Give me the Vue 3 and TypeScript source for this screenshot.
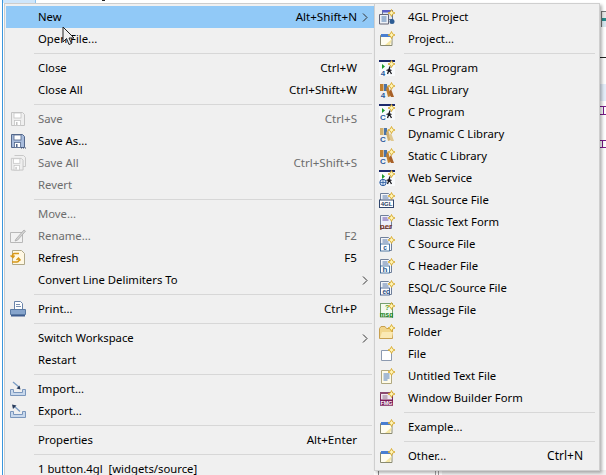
<script setup lang="ts">
type Row = { label?: string; key?: string; icon?: string; off?: boolean; arrow?: boolean; active?: boolean; sep?: boolean };

const star = '<path d="M12.500 .5l1.100 2.400 2.400 1.100-2.400 1.100-1.100 2.400-1.100-2.400-2.400-1.100 2.400-1.100z" fill="#fff6b8" stroke="#d8a828" stroke-width=".9"/>';
const sheet = '<path d="M1.500 1.500h8l3 3v10h-11z" fill="#f4f6fa" stroke="#70809a"/><path d="M3.500 4h5M3.500 6h6" stroke="#5878a8"/>';
const label = (t: string, c: string, x = 8, s = 6.500) => `<rect x="1.500" y="8" width="${t.length > 2 ? 12 : 9}" height="7" fill="#fff" stroke="${c}" stroke-width=".8"/><text x="${x}" y="14" font-size="${s}" font-family="Liberation Sans" font-weight="700" text-anchor="middle" fill="${c}">${t}</text>`;
const wiz = '<path d="M1.500 4.500h11.500v10H1.500z" fill="#fffdf0" stroke="#8a8a70"/><rect x="2" y="3" width="11" height="3" fill="#4a7fd0"/><path d="M11 14 L6 14 L13 8z" fill="#f5e6a0"/>' + star;
const runner = (t: string) => `<rect x="0" y="0" width="16" height="2" fill="#1c2a6c"/><rect x="0" y="2" width="16" height="14" fill="#f8fafc"/><path d="M3 4l3 2.500-3 2.500z" fill="#1a9a2a"/><text x="4" y="15.500" font-size="8" font-family="Liberation Sans" font-weight="700" text-anchor="middle" fill="#2a5a9c">${t}</text><path d="M11 6.500l-1 3-2.500 1M10 9.500l2.500 1M10 10l-1.500 4M10.500 10.500l2 3.500" stroke="#1a1a20" stroke-width="1.300" fill="none"/>` + star;
const books = (t: string, c = '#c08030') => `<path d="M1 2h3.500v7H1z" fill="${c}"/><path d="M5 2h3v7H5z" fill="#4a74a8"/><path d="M9 3l3 11-3 1-2-8z" fill="${c}"/><path d="M12 7l3 8h-3l-2-5z" fill="${c === '#c08030' ? '#a86028' : '#e0c890'}"/><text x="4" y="15.500" font-size="8" font-family="Liberation Sans" font-weight="700" text-anchor="middle" fill="#2a5a9c">${t}</text>` + star;
const disk = (c: string, b: string) => `<path d="M1.500 1.500h11l2 2v11h-13z" fill="${b}" stroke="${c}"/><rect x="4" y="2" width="7" height="5" fill="#fff" stroke="${c}" stroke-width=".8"/><rect x="4.500" y="9.500" width="6" height="5" fill="#fff" stroke="${c}" stroke-width=".8"/><rect x="6" y="11" width="1.500" height="3" fill="${c}"/>`;
const tray = '<path d="M.5 8.500h3v3h9v-3h3v6H.5z" fill="#c8d8ec" stroke="#7a96bc"/>';

const icons: Record<string, string> = {
  save: disk('#c4c4c4', '#efefef'),
  saveas: disk('#54688c', '#a8bcdc') + '<path d="M15 15h1M13 15h1M11 15h1" stroke="#3a4a68"/>',
  saveall: '<path d="M4.500 .5h9l2 2v9h-3" fill="none" stroke="#c8c8c8"/>' + '<g transform="translate(0 2) scale(.9)">' + disk('#c4c4c4', '#efefef') + '</g>',
  rename: '<path d="M.5 4.500h12v10H.5z" fill="#f2f2f2" stroke="#b8b8b8"/><path d="M6 11l8-9 1.500 1.200-8 9-2.500.8z" fill="#d4d4d4" stroke="#a8a8a8" stroke-width=".8"/>',
  refresh: '<path d="M2.500 .5h9l3 3v11h-12z" fill="#fff8e4" stroke="#b0a888"/><path d="M9 3.500H4.500C3 3.500 2 5 3 6.500M.5 5.500l2.500 2 1.500-2M2 12h5c2 0 2.500-2 1.500-3.500M10.500 10.500 8.500 8 6.500 10" stroke="#d89818" stroke-width="1.500" fill="none"/>',
  print: '<path d="M4.500 .5h6l2 2v6h-8z" fill="#fff" stroke="#6a84aa"/><path d="M6 3.500h4M6 5.500h5" stroke="#7a90b0"/><path d="M.5 8.500h15v5H.5z" fill="#86a4cc" stroke="#5a7aa4"/><path d="M1 14h14v1.500H1z" fill="#3e5c90"/>',
  import: tray + '<path d="M3 1l6 5" stroke="#7a9cc4" stroke-width="1.300"/><path d="M10.500 8.500 6.500 7.500 9.500 4.500z" fill="#283c5c"/>',
  export: tray + '<path d="M4 3l6 5.500" stroke="#7a9cc4" stroke-width="1.300"/><path d="M2 1.500 6.500 2.500 3 6z" fill="#283c5c"/>',
  project4gl: '<rect x="3.500" y="1.500" width="10" height="9" fill="#dfe6f2" stroke="#6a7a9a"/><rect x="3.500" y="1" width="10" height="2.500" fill="#5a5ec8"/><path d="M.5 5.500h9v9.500h-9z" fill="#eef1f6" stroke="#667"/><path d="M2.500 8h5M2.500 10h5M2.500 12h5" stroke="#4a7ab0"/><circle cx="13" cy="12.500" r="2.500" fill="#2c5c94"/>' + star,
  wiz,
  program4: runner('4'),
  programc: runner('C'),
  web: runner('') + '<circle cx="4" cy="12.500" r="3.200" fill="#dde8f6" stroke="#2a5aa0"/><path d="M1 12.500h6M4 9.500v6" stroke="#2a5aa0" stroke-width=".8"/>',
  lib4: books('4'),
  libdyn: books('C', '#d0b070'),
  libc: books('C'),
  src4gl: sheet + `<rect x=".5" y="8" width="14" height="7.500" fill="#fff" stroke="#30466e"/><text x="7.500" y="14.300" font-size="6" font-family="Liberation Sans" font-weight="700" text-anchor="middle" fill="#24385c">4GL</text>` + star,
  per: sheet.replace('#f4f6fa', '#eef0fa').replace(/#5878a8/, '#6a50a8') + `<text x="7" y="15" font-size="8" font-family="Liberation Sans" font-weight="700" text-anchor="middle" fill="#783020">per</text>` + star,
  srcc: sheet + label('c', '#2a5a90', 6) + star,
  srch: sheet + label('h', '#2a5a90', 6, 8) + star,
  srcec: sheet + label('ec', '#2a4a80', 7) + star,
  msg: '<rect x="1.500" y="1.500" width="12" height="13.500" fill="#f4faf0" stroke="#78a070"/><text x="6" y="8" font-size="7" font-weight="700" font-family="Liberation Sans" fill="#48a030">?</text><text x="7.500" y="14.500" font-size="6.500" font-family="Liberation Sans" font-weight="700" text-anchor="middle" fill="#128020">msg</text>' + star,
  folder: '<path d="M.5 4.500 2 2.500h4l1.500 2h6v10H.5z" fill="#f2d68c" stroke="#c8a050"/><path d="M1 14l2-6h11l-1 6z" fill="#fbe9b4"/>' + star,
  file: '<path d="M2.500 4.500h8.500l1.500 1.500v8.500h-10z" fill="#fff" stroke="#8c9ab0"/>' + star,
  text: '<path d="M2.500 2.500h8l2 2v11h-10z" fill="#fffbe8" stroke="#b0a880"/><path d="M4.500 6h6M4.500 8h6M4.500 10h6M4.500 12h4" stroke="#4a7ac0"/>' + star,
  form: '<rect x="1.500" y="2.500" width="12" height="12.500" fill="#f0e8f0" stroke="#7a2a5a"/><rect x="1" y="2" width="13" height="2" fill="#8a4a70"/><path d="M3.500 6h5M3.500 8h5" stroke="#90708a"/><rect x="1" y="9.500" width="13" height="6" fill="#7a1a58"/><text x="7.500" y="15" font-size="5.500" font-family="Liberation Sans" font-weight="700" text-anchor="middle" fill="#fff">FMG</text>' + star,
};

const mainRows: Row[] = [
  { label: 'New', key: 'Alt+Shift+N', arrow: true, active: true },
  { label: 'Open File...' },
  { sep: true },
  { label: 'Close', key: 'Ctrl+W' },
  { label: 'Close All', key: 'Ctrl+Shift+W' },
  { sep: true },
  { label: 'Save', key: 'Ctrl+S', icon: 'save', off: true },
  { label: 'Save As...', icon: 'saveas' },
  { label: 'Save All', key: 'Ctrl+Shift+S', icon: 'saveall', off: true },
  { label: 'Revert', off: true },
  { sep: true },
  { label: 'Move...', off: true },
  { label: 'Rename...', key: 'F2', icon: 'rename', off: true },
  { label: 'Refresh', key: 'F5', icon: 'refresh' },
  { label: 'Convert Line Delimiters To', arrow: true },
  { sep: true },
  { label: 'Print...', key: 'Ctrl+P', icon: 'print' },
  { sep: true },
  { label: 'Switch Workspace', arrow: true },
  { label: 'Restart' },
  { sep: true },
  { label: 'Import...', icon: 'import' },
  { label: 'Export...', icon: 'export' },
  { sep: true },
  { label: 'Properties', key: 'Alt+Enter' },
  { sep: true },
  { label: '1 button.4gl  [widgets/source]' },
];

const subRows: Row[] = [
  { label: '4GL Project', icon: 'project4gl' },
  { label: 'Project...', icon: 'wiz' },
  { sep: true },
  { label: '4GL Program', icon: 'program4' },
  { label: '4GL Library', icon: 'lib4' },
  { label: 'C Program', icon: 'programc' },
  { label: 'Dynamic C Library', icon: 'libdyn' },
  { label: 'Static C Library', icon: 'libc' },
  { label: 'Web Service', icon: 'web' },
  { label: '4GL Source File', icon: 'src4gl' },
  { label: 'Classic Text Form', icon: 'per' },
  { label: 'C Source File', icon: 'srcc' },
  { label: 'C Header File', icon: 'srch' },
  { label: 'ESQL/C Source File', icon: 'srcec' },
  { label: 'Message File', icon: 'msg' },
  { label: 'Folder', icon: 'folder' },
  { label: 'File', icon: 'file' },
  { label: 'Untitled Text File', icon: 'text' },
  { label: 'Window Builder Form', icon: 'form' },
  { sep: true },
  { label: 'Example...', icon: 'wiz' },
  { sep: true },
  { label: 'Other...', key: 'Ctrl+N', icon: 'wiz' },
];
</script>

<template>
  <div class="page">
    <div class="behind">
      <span class="edge"></span><span class="tab"></span><span class="b1"></span><span class="b2"></span><span class="b3"></span>
      <span class="b6"></span><span class="b7"></span><span class="b8"></span><span class="b9"></span><span class="b10"></span>
      <svg class="frag" width="6" height="50" viewBox="0 0 6 50"><path d="M0 6.500h6M3.500 6v9M0 14.500h6M0 40.500h6M2.500 40v8M0 47.500h6" fill="none" stroke="#7a1a88" /></svg>
    </div>
    <div class="menu main">
      <template v-for="(r, i) in mainRows" :key="i">
        <div v-if="r.sep" class="sep"></div>
        <div v-else class="row" :class="{ off: r.off, active: r.active, 'has-arrow': r.arrow }">
          <span class="slot"><svg v-if="r.icon" width="16" height="16" viewBox="0 0 16 16" v-html="icons[r.icon]"></svg></span>
          <span class="label">{{ r.label }}</span>
          <span v-if="r.key" class="key">{{ r.key }}</span>
          <svg v-if="r.arrow" class="arrow" width="6" height="9" viewBox="0 0 6 9"><path d="M1 .5l4 4-4 4" fill="none" stroke="#333" /></svg>
        </div>
      </template>
    </div>

    <div class="menu sub">
      <template v-for="(r, i) in subRows" :key="i">
        <div v-if="r.sep" class="sep"></div>
        <div v-else class="row">
          <span class="slot"><svg v-if="r.icon" width="16" height="16" viewBox="0 0 16 16" v-html="icons[r.icon]"></svg></span>
          <span class="label">{{ r.label }}</span>
          <span v-if="r.key" class="key">{{ r.key }}</span>
        </div>
      </template>
    </div>

    <svg class="cursor" width="14" height="22" viewBox="0 0 14 22"><path d="M1 1v15l3.500-3.500 2.500 6 2.500-1-2.500-5.500h5z" fill="#f0f0f0" stroke="#222" /></svg>
  </div>
</template>

<style scoped>
.page {
  position: relative;
  width: 606px;
  height: 475px;
  overflow: hidden;
  background: #fff;
  font-family: "Noto Sans", sans-serif;
  font-size: 11.3px;
  color: #000;
}
.menu {
  position: relative;
  background: #f0f0f0;
  box-sizing: border-box;
}
.main {
  margin: 3px 0 0 4px;
  padding: 2px 0 0 1px;
  width: 370px;
  height: 472px;
  border-left: 1px solid #cdcdcd;
  border-top: 1px solid #cdcdcd;
}
.sub {
  position: absolute;
  left: 374px;
  top: 3px;
  width: 226px;
  height: 468px;
  padding: 2px 2px 0 0;
  border: 1px solid #cfcfcf;
  box-shadow: 2px 2px 3px rgba(0, 0, 0, 0.3);
  z-index: 2;
}
.row {
  display: flex;
  align-items: center;
  height: 22px;
  white-space: pre;
}
.main .row {
  padding-right: 6px;
}
.active {
  background: #91c9f7;
}
.off {
  color: #6d6d6d;
}
.slot {
  flex: none;
  display: flex;
  align-items: center;
  width: 32px;
  padding-left: 4px;
  box-sizing: border-box;
}
.sub .slot {
  width: 33px;
}
.label {
  flex: 1;
  margin-bottom: 2px;
}
.key {
  margin: 0 11px 2px 0;
  font-size: 11.6px;
}
.has-arrow .key {
  margin-right: 5px;
}
.sub .key {
  margin-right: 14px;
  font-size: 12px;
}
.arrow {
  flex: none;
}
.sep {
  height: 1px;
  margin: 3px 2px 3px 28px;
  background: #d7d7d7;
}
.sub .sep {
  margin-left: 29px;
}
.cursor {
  position: absolute;
  left: 62px;
  top: 26px;
  z-index: 3;
}
.behind span,
.frag {
  position: absolute;
}
.frag {
  left: 600px;
  top: 100px;
}
.edge {
  left: 2px;
  top: 0;
  bottom: 0;
  width: 1px;
  background: #3a96dd;
}
.tab {
  left: 3px;
  top: 0;
  width: 32px;
  height: 3px;
  background: #cfe6fb;
  border-right: 1px solid #8cc4f0;
}
.b1 {
  left: 102px;
  top: 0;
  width: 3px;
  height: 1px;
  background: #222;
}
.b2 {
  left: 600px;
  top: 57px;
  width: 6px;
  height: 1px;
  background: #222;
}
.b3 {
  left: 600px;
  top: 84px;
  width: 6px;
  height: 17px;
  background: #e4eefa;
}
.b6 {
  left: 378px;
  top: 470px;
  width: 1px;
  height: 5px;
  background: #8a8a8a;
}
.b7 {
  left: 435px;
  top: 470px;
  width: 1px;
  height: 5px;
  background: #a0a0a0;
}
.b8 {
  left: 438px;
  top: 470px;
  width: 1px;
  height: 5px;
  background: #a0a0a0;
}
.b9 {
  left: 442px;
  top: 470px;
  width: 164px;
  height: 5px;
  background: #f0f0f0;
}
.b10 {
  left: 601px;
  top: 11px;
  width: 5px;
  height: 16px;
  box-sizing: border-box;
  background: linear-gradient(#e8e8e8 0 40%, #2a8a8a 40% 60%, #d8e8f0 60%);
  border-top: 1px solid #777;
  border-left: 1px solid #777;
}
</style>

<style>
body {
  margin: 0;
}
</style>
